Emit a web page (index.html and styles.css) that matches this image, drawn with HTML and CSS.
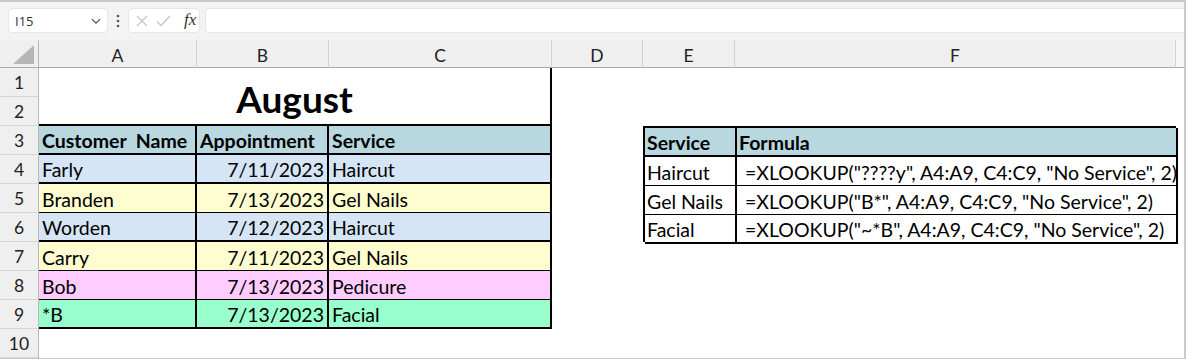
FILE: index.html
```html
<!DOCTYPE html>
<html>
<head>
<meta charset="utf-8">
<title>XLOOKUP wildcard</title>
<link rel="stylesheet" href="styles.css">
</head>
<body>
<div class="frame">
  <div class="topbar">
    <div class="namebox">
      <span class="ref">I15</span>
      <svg class="chev" width="10" height="7" viewBox="0 0 10 7"><path d="M1 1.2 L5 5.2 L9 1.2" fill="none" stroke="#5a5a5a" stroke-width="1.3"/></svg>
    </div>
    <svg class="dots" width="4" height="14" viewBox="0 0 4 14"><circle cx="2" cy="2" r="1.3" fill="#555"/><circle cx="2" cy="7" r="1.3" fill="#555"/><circle cx="2" cy="12" r="1.3" fill="#555"/></svg>
    <div class="fxbox">
      <svg class="ico" width="12" height="12" viewBox="0 0 12 12"><path d="M1 1 L11 11 M11 1 L1 11" fill="none" stroke="#c6c6c6" stroke-width="1.3"/></svg>
      <svg class="ico" width="15" height="12" viewBox="0 0 15 12"><path d="M1 6.5 L5 10.5 L14 1" fill="none" stroke="#c6c6c6" stroke-width="1.3"/></svg>
      <span class="fx">fx</span>
    </div>
    <div class="input"></div>
  </div>
  <div class="sheet">
    <div class="corner"><svg width="22" height="19" viewBox="0 0 22 19"><path d="M21 0 L21 19 L0 19 Z" fill="#b7b7b7"/></svg></div>
    <div class="colhead">A</div>
    <div class="colhead">B</div>
    <div class="colhead">C</div>
    <div class="colhead">D</div>
    <div class="colhead">E</div>
    <div class="colhead">F</div>
    <div class="colhead tail"></div>

    <div class="rowheads">
      <div class="rowhead">1</div>
      <div class="rowhead">2</div>
      <div class="rowhead">3</div>
      <div class="rowhead">4</div>
      <div class="rowhead">5</div>
      <div class="rowhead">6</div>
      <div class="rowhead">7</div>
      <div class="rowhead">8</div>
      <div class="rowhead">9</div>
      <div class="rowhead">10</div>
    </div>

    <div class="main">
      <div class="title">August</div>
      <div class="c th">Customer&nbsp; Name</div>
      <div class="c th">Appointment</div>
      <div class="c th">Service</div>

      <div class="c blue b2">Farly</div>
      <div class="c blue b2 num">7/11/2023</div>
      <div class="c blue b2">Haircut</div>

      <div class="c yellow">Branden</div>
      <div class="c yellow num">7/13/2023</div>
      <div class="c yellow">Gel Nails</div>

      <div class="c blue b2">Worden</div>
      <div class="c blue b2 num">7/12/2023</div>
      <div class="c blue b2">Haircut</div>

      <div class="c yellow">Carry</div>
      <div class="c yellow num">7/11/2023</div>
      <div class="c yellow">Gel Nails</div>

      <div class="c pink">Bob</div>
      <div class="c pink num">7/13/2023</div>
      <div class="c pink">Pedicure</div>

      <div class="c green b2">*B</div>
      <div class="c green b2 num">7/13/2023</div>
      <div class="c green b2">Facial</div>
    </div>

    <div class="lookup">
      <div class="c th">Service</div>
      <div class="c th">Formula</div>
      <div class="c">Haircut</div>
      <div class="c fml">=XLOOKUP("????y", A4:A9, C4:C9, "No Service", 2)</div>
      <div class="c">Gel Nails</div>
      <div class="c fml">=XLOOKUP("B*", A4:A9, C4:C9, "No Service", 2)</div>
      <div class="c last">Facial</div>
      <div class="c fml last">=XLOOKUP("~*B", A4:A9, C4:C9, "No Service", 2)</div>
    </div>
  </div>
</div>
</body>
</html>
```
FILE: styles.css
```css
* { box-sizing: border-box; }
html, body { margin: 0; padding: 0; background: #ffffff; }
body { width: 1186px; height: 359px; overflow: hidden; }

.frame {
  width: 1186px;
  height: 359px;
  border-top: 2px solid #c9c9cc;
  border-right: 2px solid #c9c9cc;
  border-bottom: 1px solid #c9c9cc;
  display: flex;
  flex-direction: column;
  overflow: hidden;
}

/* formula bar */
.topbar {
  height: 38px;
  flex: none;
  background: #f3f3f3;
  display: flex;
  align-items: flex-start;
  padding: 6px 0 0 8px;
}
.namebox {
  width: 100px;
  height: 25px;
  background: #fff;
  border: 1px solid #e6e6e6;
  border-radius: 4px;
  display: flex;
  align-items: center;
  justify-content: space-between;
  padding: 0 6px 0 6px;
}
.ref {
  font-family: "Open Sans", "Noto Sans", sans-serif;
  font-size: 13px;
  color: #333;
}
.chev { margin-top: 2px; }
.dots { margin: 6px 8px 0 8px; }
.fxbox {
  width: 72px;
  height: 25px;
  background: #fff;
  border: 1px solid #e6e6e6;
  border-radius: 4px;
  display: flex;
  align-items: center;
  padding: 0 0 0 7px;
  gap: 8px;
}
.fx {
  font-family: "Liberation Serif", serif;
  font-style: italic;
  font-size: 17px;
  color: #333;
  margin-left: 5px;
  margin-top: -2px;
}
.input {
  flex: 1;
  height: 25px;
  margin-left: 5px;
  background: #fff;
  border: 1px solid #e6e6e6;
  border-right: none;
  border-radius: 4px 0 0 4px;
}

/* sheet grid */
.sheet {
  flex: none;
  display: grid;
  grid-template-columns: 39px 158px 132px 223px 91px 92px 441px 8px;
  grid-template-rows: 28px repeat(10, 29px);
  font-family: "Lato", "Liberation Sans", sans-serif;
  color: #000;
}
.corner {
  background: #efefef;
  border-right: 1px solid #b9b9b9;
  border-bottom: 1px solid #a9a9a9;
  display: flex;
  align-items: flex-end;
  justify-content: flex-end;
  padding: 0 3px 3px 0;
}
.colhead {
  background: #efefef;
  border-right: 1px solid #d2d2d2;
  border-bottom: 1px solid #a9a9a9;
  display: flex;
  align-items: center;
  justify-content: center;
  font-size: 17.5px;
  color: #222;
  padding-top: 3px;
}
.colhead.tail { background: #f7f7f7; border-right: none; }

.rowheads {
  grid-column: 1;
  grid-row: 2 / 12;
  display: flex;
  flex-direction: column;
  background: #efefef;
  border-right: 1px solid #b9b9b9;
}
.rowhead {
  height: 29px;
  flex: none;
  border-bottom: 1px solid #d6d6d6;
  display: flex;
  align-items: center;
  justify-content: center;
  font-size: 17.5px;
  color: #222;
  padding-top: 1px;
}

/* main table A1:C9 */
.main {
  grid-column: 2 / 5;
  grid-row: 2 / 11;
  display: grid;
  grid-template-columns: 158px 132px 223px;
  grid-template-rows: 58px repeat(7, 29px);
}
.title {
  grid-column: 1 / 4;
  border-right: 2px solid #000;
  border-bottom: 2px solid #000;
  display: flex;
  align-items: flex-end;
  justify-content: center;
  font-weight: 700;
  font-size: 37px;
  line-height: 44px;
  padding: 0 0 3px 0;
}
.c {
  display: flex;
  align-items: flex-end;
  font-size: 19.5px;
  line-height: 23px;
  padding: 0 3px 1px 3px;
  border-right: 2px solid #000;
  border-bottom: 1px solid #000;
  white-space: nowrap;
  overflow: hidden;
}
.main .c.th, .lookup .c.th { border-bottom: 2px solid #000; }
.th { background: #b8d7de; font-weight: 700; }
.num { justify-content: flex-end; }
.b2 { border-bottom-width: 2px; }
.blue { background: #d6e5f5; }
.yellow { background: #fefdcf; }
.pink { background: #ffccff; }
.green { background: #99ffcc; }

/* lookup table E3:F6 */
.lookup {
  grid-column: 6 / 8;
  grid-row: 4 / 8;
  display: grid;
  grid-template-columns: 92px 441px;
  grid-template-rows: repeat(4, 29px);
  border-left: 2px solid #000;
  border-top: 2px solid #000;
}
.lookup .c { padding-left: 2px; }
.lookup .c.fml { padding-left: 8px; }
.lookup .c.last { border-bottom-width: 2px; }
```
